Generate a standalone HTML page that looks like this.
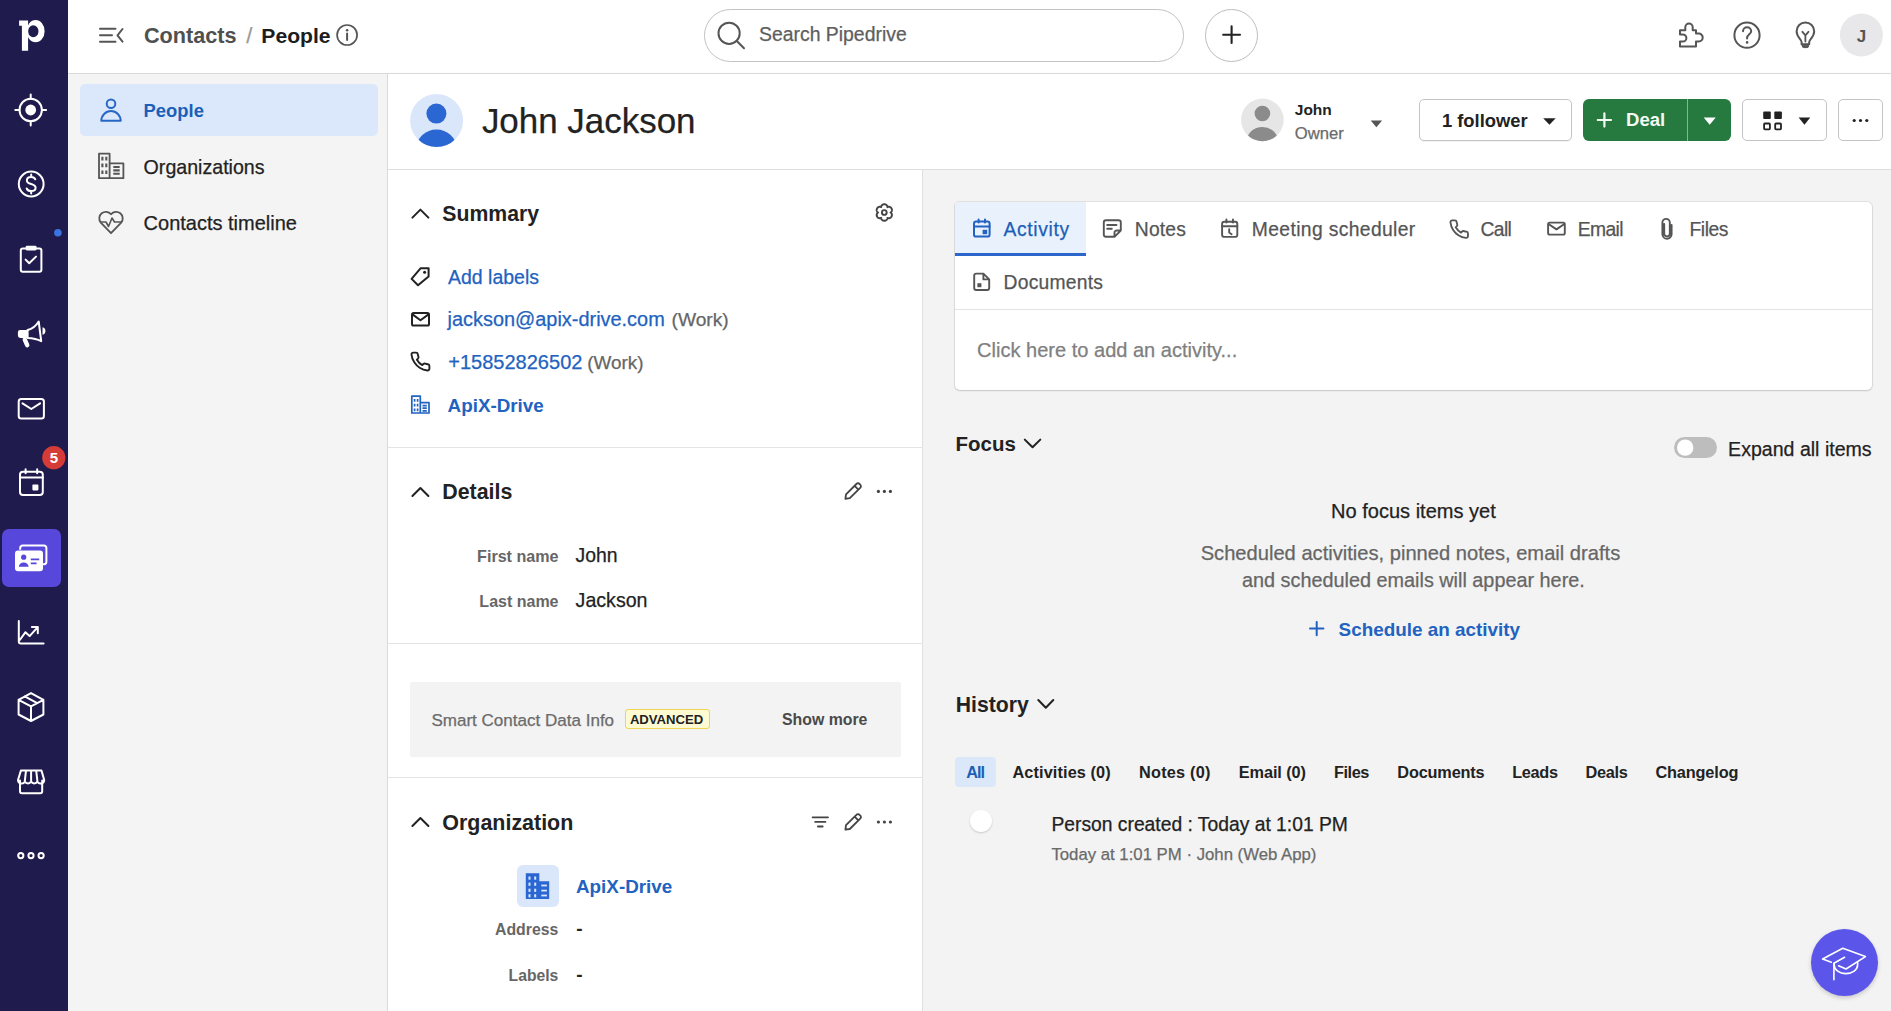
<!DOCTYPE html>
<html><head><meta charset="utf-8"><style>
html,body{margin:0;padding:0;width:1891px;height:1011px;overflow:hidden;background:#f3f3f3}
body{position:relative;font-family:"Liberation Sans",sans-serif}
.t{position:absolute;white-space:nowrap;line-height:1}.r{-webkit-text-stroke:0.25px currentColor}
svg.ov{position:absolute;left:0;top:0}
</style></head><body>
<div style="position:absolute;left:0px;top:0px;width:1891px;height:1011px;background:#f3f3f3"></div>
<div style="position:absolute;left:68px;top:0px;width:1823px;height:73px;background:#fff"></div>
<div style="position:absolute;left:68px;top:73px;width:1823px;height:1px;background:#d9d9d9;box-shadow:0 1px 2px rgba(0,0,0,.08)"></div>
<div style="position:absolute;left:68px;top:74px;width:320px;height:937px;background:#f4f4f4"></div>
<div style="position:absolute;left:387px;top:74px;width:1px;height:937px;background:#dadada"></div>
<div style="position:absolute;left:79.5px;top:83.5px;width:298.0px;height:52.5px;background:#dbe8fb;border-radius:5px"></div>
<div style="position:absolute;left:388px;top:74px;width:1503px;height:95px;background:#fff"></div>
<div style="position:absolute;left:388px;top:169px;width:1503px;height:1px;background:#dedede"></div>
<div style="position:absolute;left:388px;top:170px;width:534px;height:841px;background:#fff"></div>
<div style="position:absolute;left:922px;top:170px;width:1px;height:841px;background:#e0e0e0"></div>
<div style="position:absolute;left:388px;top:447px;width:534px;height:1px;background:#e4e4e4"></div>
<div style="position:absolute;left:388px;top:643px;width:534px;height:1px;background:#e4e4e4"></div>
<div style="position:absolute;left:388px;top:777px;width:534px;height:1px;background:#e4e4e4"></div>
<div style="position:absolute;left:0px;top:0px;width:68px;height:1011px;background:#1f1b4c"></div>
<div style="position:absolute;left:2px;top:529px;width:59px;height:58px;background:#5747da;border-radius:7px"></div>
<div style="position:absolute;left:704px;top:9px;width:480px;height:53px;border:1px solid #c2c2c2;border-radius:27px;box-sizing:border-box;background:#fff"></div>
<div style="position:absolute;left:1205px;top:9px;width:53px;height:53px;border:1.2px solid #bdbdbd;border-radius:50%;box-sizing:border-box;background:#fff"></div>
<div style="position:absolute;left:1419px;top:99px;width:153px;height:42px;border:1px solid #c4c4c4;border-radius:5px;box-sizing:border-box;background:#fff;box-shadow:0 1px 1px rgba(0,0,0,.06)"></div>
<div style="position:absolute;left:1583px;top:99px;width:148px;height:42px;background:#26793f;border-radius:6px"></div>
<div style="position:absolute;left:1687px;top:99px;width:1px;height:42px;background:#7fb98e"></div>
<div style="position:absolute;left:1742px;top:99px;width:85px;height:42px;border:1px solid #c4c4c4;border-radius:5px;box-sizing:border-box;background:#fff"></div>
<div style="position:absolute;left:1838px;top:99px;width:45px;height:42px;border:1px solid #c4c4c4;border-radius:5px;box-sizing:border-box;background:#fff"></div>
<div style="position:absolute;left:409.5px;top:682px;width:491.0px;height:74.5px;background:#f3f3f3;border-radius:2px"></div>
<div style="position:absolute;left:624.7px;top:709.1px;width:85.09999999999991px;height:20.299999999999955px;background:#fefad2;border:1px solid #eed654;border-radius:3px;box-sizing:border-box"></div>
<div style="position:absolute;left:516.5px;top:865px;width:42.5px;height:41.5px;background:#dae7fb;border-radius:6px"></div>
<div style="position:absolute;left:955px;top:202px;width:917px;height:187.5px;background:#fff;border-radius:4px 5px 5px 5px;box-shadow:0 0 0 1px rgba(0,0,0,.075),0 1px 2px rgba(0,0,0,.12)"></div>
<div style="position:absolute;left:955px;top:202px;width:131.29999999999995px;height:54px;background:#e9f1fc;border-top-left-radius:4px"></div>
<div style="position:absolute;left:955px;top:253px;width:131.29999999999995px;height:3px;background:#2a66cc"></div>
<div style="position:absolute;left:955px;top:308.5px;width:917px;height:1.0px;background:#e3e3e3"></div>
<div style="position:absolute;left:1674.4px;top:437px;width:42.399999999999864px;height:21.30000000000001px;background:#bdbdbd;border-radius:11px"></div>
<div style="position:absolute;left:955.1px;top:757.4px;width:41.299999999999955px;height:30.100000000000023px;background:#dbe8fa;border-radius:4px"></div>
<div style="position:absolute;left:970.4px;top:809.6px;width:22.0px;height:22.0px;background:#fff;border-radius:50%;box-shadow:0 1px 2px rgba(0,0,0,.18)"></div>
<div style="position:absolute;left:1810.5px;top:929px;width:67.0px;height:67px;background:#5b56e9;border-radius:50%;box-shadow:0 2px 4px rgba(0,0,0,.18)"></div>
<svg class="ov" width="1891" height="1011" viewBox="0 0 1891 1011">
<g stroke="#555" stroke-width="2" fill="none" stroke-linecap="round" stroke-linejoin="round">
<path d="M100 28.8H115.5M100 35.3H112M100 41.8H115.5M122.5 29L117.5 35.3L122.5 41.6"/>
<circle cx="347.1" cy="35" r="10" stroke-width="1.7"/>
<path d="M347.1 33.5V40" stroke-width="2"/>
</g>
<circle cx="347.1" cy="30.2" r="1.3" fill="#555"/>
<g stroke="#555" stroke-width="2" fill="none" stroke-linecap="round" stroke-linejoin="round">
<circle cx="729.1" cy="33.3" r="10.6"/><path d="M736.8 41L744 48.2"/>
</g>
<path d="M1223.2 34.7H1240M1231.6 26.4V43" stroke="#222" stroke-width="2.1" stroke-linecap="round"/>
<g stroke="#555" stroke-width="2" fill="none" stroke-linecap="round" stroke-linejoin="round">
<path d="M1680 30.2H1685.3V27.3A3.7 3.7 0 0 1 1692.7 27.3V30.2H1696V33.6H1698.8A3.9 3.9 0 0 1 1698.8 41.4H1696V46.5H1680V41.6H1682.8A3.6 3.6 0 0 0 1682.8 34.4H1680Z"/>
<circle cx="1747" cy="35.2" r="12.6"/>
<path d="M1743 31.3A4.1 4.1 0 0 1 1751.2 31.3C1751.2 34 1747.1 34.6 1747.1 37.8V38.6"/>
</g>
<circle cx="1747.1" cy="42.4" r="1.3" fill="#555"/>
<g stroke="#555" stroke-width="2" fill="none" stroke-linecap="round" stroke-linejoin="round">
<path d="M1801.6 44.2V42C1801.6 39.5 1796.6 37 1796.6 31.2A8.8 8.8 0 0 1 1814.2 31.2C1814.2 37 1809.2 39.5 1809.2 42V44.2Z"/>
<path d="M1802.3 45.2H1808.5V46.2A1.4 1.4 0 0 1 1807.1 47.6H1803.7A1.4 1.4 0 0 1 1802.3 46.2Z" fill="#555" stroke-width="1"/>
<path d="M1802.4 31.8L1805.4 35.4L1808.4 31.8M1805.4 35.4V41.5" stroke-width="1.8"/>
</g>
<circle cx="1861.4" cy="35" r="21.5" fill="#e8e8ea"/>
<g stroke="#2767c6" stroke-width="2" fill="none" stroke-linejoin="round">
<circle cx="111" cy="103.8" r="4.3"/>
<path d="M101.3 120.8A9.7 9.7 0 0 1 120.7 120.8Z"/>
</g>
<g stroke="#555" stroke-width="1.8" fill="none" stroke-linejoin="round">
<path d="M99 178.2V153.6H109.6V178.2ZM109.6 163.4H123.4V178.2H109.6"/>
<path d="M102.4 156.8V160.4M106.3 156.8V160.4M102.4 163.6V167.2M106.3 163.6V167.2M102.4 170.4V174M106.3 170.4V174M113.3 167H119.7M113.3 170.4H119.7M113.3 173.8H119.7" stroke-width="2.1" stroke-linecap="butt"/>
<path d="M111 233.2L100.8 222.6A6.4 6.4 0 0 1 111 214.2A6.4 6.4 0 0 1 121.2 222.6Z"/>
<path d="M100.5 222H106L108.5 226.5L112 218L114.5 222H121.5" stroke-width="1.6"/>
</g>
<defs><clipPath id="av"><circle cx="436.6" cy="120.5" r="26.5"/></clipPath><clipPath id="av2"><circle cx="1262.4" cy="119.9" r="21.3"/></clipPath></defs>
<circle cx="436.6" cy="120.5" r="26.5" fill="#dae7fa"/>
<g clip-path="url(#av)"><circle cx="436.4" cy="113.6" r="10" fill="#2a67d2"/><ellipse cx="436.5" cy="148" rx="20" ry="18.5" fill="#2a67d2"/></g>
<circle cx="1262.4" cy="119.9" r="21.3" fill="#e6e6e6"/>
<g clip-path="url(#av2)"><circle cx="1262.4" cy="113.5" r="7.8" fill="#8b8b8b"/><ellipse cx="1262.4" cy="141" rx="15.5" ry="14" fill="#8b8b8b"/></g>
<path d="M1370.7 120.5H1382.1L1376.4 127.2Z" fill="#555"/>
<path d="M1543.2 118.3H1555.7L1549.45 124.8Z" fill="#222222"/>
<path d="M1597.8 120H1611M1604.4 113.4V126.6" stroke="#f4fbf2" stroke-width="2.2" stroke-linecap="round"/>
<path d="M1703.7 117.6H1715.7L1709.7 124.8Z" fill="#fff"/>
<rect x="1763.2" y="111.5" width="7.6" height="7.6" rx="1" fill="#222222"/><rect x="1774.3" y="111.5" width="7.6" height="7.6" rx="1" fill="#222222"/>
<rect x="1764.1" y="123.5" width="5.8" height="5.8" rx="0.8" fill="none" stroke="#222222" stroke-width="1.8"/><rect x="1775.2" y="123.5" width="5.8" height="5.8" rx="0.8" fill="none" stroke="#222222" stroke-width="1.8"/>
<path d="M1798.6 117.6H1810.3L1804.45 124.8Z" fill="#222222"/>
<circle cx="1854.2" cy="120.5" r="1.6" fill="#222222"/><circle cx="1860.5" cy="120.5" r="1.6" fill="#222222"/><circle cx="1866.8" cy="120.5" r="1.6" fill="#222222"/>
<g stroke="#222222" stroke-width="2" fill="none" stroke-linecap="round" stroke-linejoin="round">
<path d="M412.4 217.6L420.4 209.6L428.4 217.6"/>
<path d="M412.4 496L420.4 488L428.4 496"/>
<path d="M412.4 826L420.4 818L428.4 826"/>
</g>
<path d="M890.50 212.50 L890.85 212.33 L891.06 212.15 L891.24 211.95 L891.38 211.76 L891.51 211.55 L891.62 211.34 L891.71 211.13 L891.78 210.91 L891.84 210.69 L891.88 210.47 L891.91 210.25 L891.92 210.02 L891.91 209.80 L891.90 209.58 L891.86 209.37 L891.82 209.15 L891.75 208.94 L891.68 208.74 L891.59 208.54 L891.49 208.35 L891.37 208.17 L891.25 207.99 L891.11 207.82 L890.96 207.66 L890.80 207.52 L890.62 207.38 L890.44 207.25 L890.25 207.14 L890.05 207.04 L889.85 206.95 L889.64 206.88 L889.42 206.82 L889.19 206.77 L888.96 206.74 L888.73 206.73 L888.49 206.74 L888.24 206.77 L887.99 206.82 L887.72 206.91 L887.40 207.13 L887.43 206.74 L887.37 206.47 L887.30 206.22 L887.20 205.99 L887.08 205.78 L886.95 205.58 L886.81 205.40 L886.66 205.23 L886.50 205.07 L886.33 204.92 L886.15 204.79 L885.97 204.66 L885.77 204.56 L885.57 204.46 L885.37 204.38 L885.16 204.32 L884.95 204.27 L884.73 204.23 L884.52 204.21 L884.30 204.20 L884.08 204.21 L883.87 204.23 L883.65 204.27 L883.44 204.32 L883.23 204.38 L883.03 204.46 L882.83 204.56 L882.63 204.66 L882.45 204.79 L882.27 204.92 L882.10 205.07 L881.94 205.23 L881.79 205.40 L881.65 205.58 L881.52 205.78 L881.40 205.99 L881.30 206.22 L881.23 206.47 L881.17 206.74 L881.20 207.13 L880.88 206.91 L880.61 206.82 L880.36 206.77 L880.11 206.74 L879.87 206.73 L879.64 206.74 L879.41 206.77 L879.18 206.82 L878.96 206.88 L878.75 206.95 L878.55 207.04 L878.35 207.14 L878.16 207.25 L877.98 207.38 L877.80 207.52 L877.64 207.66 L877.49 207.82 L877.35 207.99 L877.23 208.17 L877.11 208.35 L877.01 208.54 L876.92 208.74 L876.85 208.94 L876.78 209.15 L876.74 209.37 L876.70 209.58 L876.69 209.80 L876.68 210.02 L876.69 210.25 L876.72 210.47 L876.76 210.69 L876.82 210.91 L876.89 211.13 L876.98 211.34 L877.09 211.55 L877.22 211.76 L877.36 211.95 L877.54 212.15 L877.75 212.33 L878.10 212.50 L877.75 212.67 L877.54 212.85 L877.36 213.05 L877.22 213.24 L877.09 213.45 L876.98 213.66 L876.89 213.87 L876.82 214.09 L876.76 214.31 L876.72 214.53 L876.69 214.75 L876.68 214.98 L876.69 215.20 L876.70 215.42 L876.74 215.63 L876.78 215.85 L876.85 216.06 L876.92 216.26 L877.01 216.46 L877.11 216.65 L877.23 216.83 L877.35 217.01 L877.49 217.18 L877.64 217.34 L877.80 217.48 L877.98 217.62 L878.16 217.75 L878.35 217.86 L878.55 217.96 L878.75 218.05 L878.96 218.12 L879.18 218.18 L879.41 218.23 L879.64 218.26 L879.87 218.27 L880.11 218.26 L880.36 218.23 L880.61 218.18 L880.88 218.09 L881.20 217.87 L881.17 218.26 L881.23 218.53 L881.30 218.78 L881.40 219.01 L881.52 219.22 L881.65 219.42 L881.79 219.60 L881.94 219.77 L882.10 219.93 L882.27 220.08 L882.45 220.21 L882.63 220.34 L882.83 220.44 L883.03 220.54 L883.23 220.62 L883.44 220.68 L883.65 220.73 L883.87 220.77 L884.08 220.79 L884.30 220.80 L884.52 220.79 L884.73 220.77 L884.95 220.73 L885.16 220.68 L885.37 220.62 L885.57 220.54 L885.77 220.44 L885.97 220.34 L886.15 220.21 L886.33 220.08 L886.50 219.93 L886.66 219.77 L886.81 219.60 L886.95 219.42 L887.08 219.22 L887.20 219.01 L887.30 218.78 L887.37 218.53 L887.43 218.26 L887.40 217.87 L887.72 218.09 L887.99 218.18 L888.24 218.23 L888.49 218.26 L888.73 218.27 L888.96 218.26 L889.19 218.23 L889.42 218.18 L889.64 218.12 L889.85 218.05 L890.05 217.96 L890.25 217.86 L890.44 217.75 L890.62 217.62 L890.80 217.48 L890.96 217.34 L891.11 217.18 L891.25 217.01 L891.37 216.83 L891.49 216.65 L891.59 216.46 L891.68 216.26 L891.75 216.06 L891.82 215.85 L891.86 215.63 L891.90 215.42 L891.91 215.20 L891.92 214.98 L891.91 214.75 L891.88 214.53 L891.84 214.31 L891.78 214.09 L891.71 213.87 L891.62 213.66 L891.51 213.45 L891.38 213.24 L891.24 213.05 L891.06 212.85 L890.85 212.67Z" fill="none" stroke="#444" stroke-width="1.9" stroke-linejoin="round"/><circle cx="884.3" cy="212.5" r="2.4" fill="none" stroke="#444" stroke-width="1.9"/>
<g stroke="#222222" stroke-width="2" fill="none" stroke-linecap="round" stroke-linejoin="round">
<path d="M420.5 268.3H428.6V276.4L418 285.3L411.6 278.9Z"/>
</g>
<circle cx="424.6" cy="272.3" r="1.5" fill="#222222"/>
<g stroke="#222222" stroke-width="2" fill="none" stroke-linecap="round" stroke-linejoin="round">
<rect x="412" y="313" width="17" height="12.6" rx="1.6"/><path d="M412.8 314.6L420.5 320.2L428.2 314.6"/>
</g>
<g transform="translate(409.6 350.8) scale(0.9)"><path d="M22 16.92v3a2 2 0 0 1-2.18 2 19.79 19.79 0 0 1-8.63-3.07 19.5 19.5 0 0 1-6-6 19.79 19.79 0 0 1-3.07-8.67A2 2 0 0 1 4.11 2h3a2 2 0 0 1 2 1.72 12.84 12.84 0 0 0 .7 2.81 2 2 0 0 1-.45 2.11L8.09 9.91a16 16 0 0 0 6 6l1.27-1.27a2 2 0 0 1 2.11-.45 12.84 12.84 0 0 0 2.81.7A2 2 0 0 1 22 16.92z" fill="none" stroke="#222222" stroke-width="2.1" stroke-linejoin="round"/></g>
<g stroke="#2262c0" stroke-width="1.7" fill="none" stroke-linejoin="round">
<path d="M411.8 413V396.2H420.3V413ZM420.3 402.6H429V413H420.3"/>
<path d="M414.6 399V401.8M417.6 399V401.8M414.6 403.7V406.5M417.6 403.7V406.5M414.6 408.4V411.2M417.6 408.4V411.2M422.5 405.6H426.8M422.5 408.2H426.8M422.5 410.8H426.8" stroke-width="1.7" stroke-linecap="butt"/>
</g>
<path d="M845.4000000000001 498.8L846.0 494.40000000000003L856.4000000000001 484.0A2.1 2.1 0 0 1 859.6 484.0L860.2 484.6A2.1 2.1 0 0 1 860.2 487.8L849.8000000000001 498.2Z M854.6 485.8L858.4000000000001 489.6" fill="none" stroke="#444" stroke-width="1.8" stroke-linejoin="round" stroke-linecap="round"/>
<circle cx="878.4" cy="491.4" r="1.6" fill="#444"/><circle cx="884.4" cy="491.4" r="1.6" fill="#444"/><circle cx="890.4" cy="491.4" r="1.6" fill="#444"/>
<path d="M812.6 817.3H828M815.2 821.9H825.4M817.9 826.5H822.7" stroke="#444" stroke-width="1.8" stroke-linecap="round"/>
<path d="M845.4000000000001 829.6L846.0 825.2L856.4000000000001 814.8000000000001A2.1 2.1 0 0 1 859.6 814.8000000000001L860.2 815.4A2.1 2.1 0 0 1 860.2 818.6L849.8000000000001 829.0Z M854.6 816.6L858.4000000000001 820.4" fill="none" stroke="#444" stroke-width="1.8" stroke-linejoin="round" stroke-linecap="round"/>
<circle cx="878.4" cy="822" r="1.6" fill="#444"/><circle cx="884.4" cy="822" r="1.6" fill="#444"/><circle cx="890.4" cy="822" r="1.6" fill="#444"/>
<path d="M525.8 899V873.2H539.3V881.3H549.2V899Z" fill="#2a67d3"/>
<g fill="#dae7fb"><rect x="528.5" y="876.5" width="2" height="3.2"/><rect x="528.5" y="882.6" width="2" height="3.2"/><rect x="528.5" y="888.7" width="2" height="3.2"/><rect x="528.5" y="894.2" width="2" height="3.2"/><rect x="534.2" y="876.5" width="2" height="3.2"/><rect x="534.2" y="882.6" width="2" height="3.2"/><rect x="534.2" y="888.7" width="2" height="3.2"/><rect x="534.2" y="894.2" width="2" height="3.2"/><rect x="541.3" y="884.6" width="5.6" height="1.8"/><rect x="541.3" y="889.7" width="5.6" height="1.8"/><rect x="541.3" y="894.6" width="5.6" height="1.8"/></g>
<g stroke="#2262c0" stroke-width="2" fill="none" stroke-linecap="round" stroke-linejoin="round">
<rect x="974" y="221.6" width="15.6" height="15" rx="2.2"/><path d="M974 226.4H989.6M978.6 219.4V222.6M985 219.4V222.6"/>
</g>
<rect x="982.6" y="229.8" width="4.6" height="4.4" fill="#2262c0"/>
<g stroke="#555" stroke-width="1.9" fill="none" stroke-linecap="round" stroke-linejoin="round">
<path d="M1114.5 236.8H1106A2.2 2.2 0 0 1 1103.8 234.6V222.4A2.2 2.2 0 0 1 1106 220.2H1118.6A2.2 2.2 0 0 1 1120.8 222.4V230.5ZM1114.5 236.8V232.7A2.2 2.2 0 0 1 1116.7 230.5H1120.8M1107.2 225H1116.5M1107.2 228.8H1111.8"/>
<rect x="1222.1" y="221.7" width="15.2" height="15.2" rx="2.2"/><path d="M1222.1 226.2H1237.3M1226.4 219.4V222.6M1233 219.4V222.6M1229.2 229.2V232.4L1231.6 234.2"/>
</g>
<g transform="translate(1448.6 218.6) scale(0.88)"><path d="M22 16.92v3a2 2 0 0 1-2.18 2 19.79 19.79 0 0 1-8.63-3.07 19.5 19.5 0 0 1-6-6 19.79 19.79 0 0 1-3.07-8.67A2 2 0 0 1 4.11 2h3a2 2 0 0 1 2 1.72 12.84 12.84 0 0 0 .7 2.81 2 2 0 0 1-.45 2.11L8.09 9.91a16 16 0 0 0 6 6l1.27-1.27a2 2 0 0 1 2.11-.45 12.84 12.84 0 0 0 2.81.7A2 2 0 0 1 22 16.92z" fill="none" stroke="#555" stroke-width="2.1" stroke-linejoin="round"/></g>
<g stroke="#555" stroke-width="1.9" fill="none" stroke-linecap="round" stroke-linejoin="round">
<rect x="1548.1" y="222.6" width="16.7" height="12" rx="1.6"/><path d="M1548.9 224.2L1556.45 229.4L1564 224.2"/>
<path d="M1664.2 224V233.6A2.8 2.8 0 0 0 1669.8 233.6V222.6A3.7 3.7 0 0 0 1662.4 222.6V234.2A4.6 4.6 0 0 0 1671.6 234.2V225"/>
<path d="M974.2 275.5A2 2 0 0 1 976.2 273.6H983.4L989.2 279.4V288A2 2 0 0 1 987.2 290H976.2A2 2 0 0 1 974.2 288ZM983.4 273.6V279.4H989.2"/>
</g>
<rect x="977.4" y="283.2" width="4" height="4" fill="#555"/>
<path d="M1024.8 439.6L1032.55 447.3L1040.3 439.6" stroke="#222222" stroke-width="2" fill="none" stroke-linecap="round" stroke-linejoin="round"/>
<circle cx="1685.2" cy="447.65" r="8.2" fill="#fff"/>
<path d="M1310 628.6H1323.4M1316.7 621.9V635.3" stroke="#2262c0" stroke-width="2" stroke-linecap="round"/>
<path d="M1038.3 700L1045.8 707.7L1053.3 700" stroke="#222222" stroke-width="2" fill="none" stroke-linecap="round" stroke-linejoin="round"/>
<g stroke="#fff" stroke-width="1.6" fill="none" stroke-linecap="round" stroke-linejoin="round">
<path d="M1831.3 962.2L1822.6 959L1842.8 948.3L1865.4 956.6L1846 969L1838.6 965.8"/>
<path d="M1844.6 957.3L1833.9 963.2V979.8"/>
<path d="M1834.2 963.2V965A11.7 8.6 0 0 0 1857.6 965V962.2"/>
</g>
<path d="M19.1 20.6H28.1V50.8H21.9V25.8H19.1Z" fill="#fff"/>
<path fill-rule="evenodd" d="M44.6 31.2A9 11.1 0 1 1 26.6 31.2A9 11.1 0 1 1 44.6 31.2ZM38.5 31.3A5.2 6 0 1 0 28.1 31.3A5.2 6 0 1 0 38.5 31.3Z" fill="#fff"/>
<g stroke="#fff" stroke-width="2" fill="none" stroke-linecap="round" stroke-linejoin="round">
<circle cx="30.7" cy="110" r="11.2"/><path d="M30.7 94.6V98.8M30.7 121.2V125.4M15.3 110H19.5M41.9 110H46.1"/>
<circle cx="31.2" cy="184" r="12.4"/><path d="M35.3 179.3C34.6 177.6 33 177 31.2 177C28.6 177 26.9 178.5 26.9 180.4C26.9 185 35.6 183 35.6 187.8C35.6 189.9 33.7 191.1 31.2 191.1C29.1 191.1 27.4 190.2 26.7 188.5M31.2 174.6V177M31.2 191.1V193.4"/>
<rect x="20.8" y="248.6" width="20.6" height="23.2" rx="2"/><path d="M25.6 259.6L29.2 263.2L36 256.6"/>
</g>
<circle cx="30.7" cy="110" r="5.4" fill="#fff"/>
<rect x="25.6" y="245.8" width="11" height="4.6" rx="1.4" fill="#fff"/>
<path d="M17.9 332.2A2.3 2.3 0 0 1 20.2 329.9H27.6V337.9H20.2A2.3 2.3 0 0 1 17.9 335.6Z" fill="#fff"/>
<path d="M27.6 330C32 329 36 326 38.7 321.5L41.2 341.2C37 338.8 32 338 27.6 337.9Z" fill="none" stroke="#fff" stroke-width="2" stroke-linejoin="round"/>
<path d="M42.5 327.3A3.8 3.8 0 0 1 42.5 334.7Z" fill="#fff"/>
<path d="M24.8 339.6L27.2 345.2" stroke="#fff" stroke-width="4.4" stroke-linecap="round"/>
<g stroke="#fff" stroke-width="2" fill="none" stroke-linecap="round" stroke-linejoin="round">
<rect x="18.7" y="398.9" width="25.2" height="19.6" rx="2.5"/><path d="M22.5 403.4L31.3 409L40.1 403.4"/>
<rect x="20" y="471.8" width="22.8" height="23.2" rx="3"/><path d="M20 477.4H42.8M25.6 469.2V473.2M37.2 469.2V473.2"/>
</g>
<rect x="32.4" y="484.6" width="6" height="5.8" rx="0.8" fill="#fff"/>
<circle cx="53.8" cy="457.7" r="11.6" fill="#d63c37"/>
<circle cx="57.9" cy="232.8" r="3.8" fill="#3a74e0"/>
<path d="M20.2 549.8V548A2.4 2.4 0 0 1 22.6 545.6H44A2.4 2.4 0 0 1 46.4 548V561.8A2.4 2.4 0 0 1 44 564.2H43" fill="none" stroke="#fff" stroke-width="2"/>
<rect x="15" y="550.5" width="28" height="20.8" rx="3" fill="#fff"/>
<circle cx="23.7" cy="557.2" r="2.6" fill="#5747da"/><path d="M18.8 566.8A4.9 4.4 0 0 1 28.6 566.8Z" fill="#5747da"/>
<path d="M30.8 559.3H39.2M30.8 563.4H36.6" stroke="#5747da" stroke-width="1.8"/>
<g stroke="#fff" stroke-width="2" fill="none" stroke-linecap="round" stroke-linejoin="round">
<path d="M18.8 621V641.6A2 2 0 0 0 20.8 643.6H43.6M19.8 640L25.5 632.2L29.6 636.1L37.5 627.4M31.9 627.1H37.8V633.2"/>
<path d="M31 693.1L43.4 699.8V714.5L31 721L18.6 714.5V699.8ZM18.6 699.8L31 706.4L43.4 699.8M31 706.4V721M24.8 696.4L37.2 703.1"/>
<path d="M20 780.5V791.2A2 2 0 0 0 22 793.2H40.2A2 2 0 0 0 42.2 791.2V780.5"/>
<path d="M20.9 770.6H41.5L44.2 780A3.6 3.6 0 0 1 37.4 781.6A3.6 3.6 0 0 1 31.1 781.6A3.6 3.6 0 0 1 24.8 781.6A3.6 3.6 0 0 1 18 780ZM26 770.6L24.8 781.2M31.1 770.6V781.2M36.2 770.6L37.4 781.2"/>
<circle cx="20.8" cy="855.6" r="2.6"/><circle cx="31" cy="855.6" r="2.6"/><circle cx="41.1" cy="855.6" r="2.6"/>
</g>
</svg>
<div class="t" style="left:144.00px;top:24.98px;font-size:21.64px;font-weight:bold;color:#505050">Contacts</div>
<div class="t r" style="left:246.14px;top:24.68px;font-size:22.00px;font-weight:normal;color:#9a9a9a">/</div>
<div class="t" style="left:261.30px;top:25.41px;font-size:21.14px;font-weight:bold;color:#1d1d1d">People</div>
<div class="t r" style="left:759.00px;top:24.78px;font-size:19.40px;font-weight:normal;color:#5e5e5e">Search Pipedrive</div>
<div class="t" style="left:1856.87px;top:28.21px;font-size:17.00px;font-weight:bold;color:#555">J</div>
<div class="t" style="left:143.60px;top:101.81px;font-size:18.42px;font-weight:bold;color:#1b5fb8">People</div>
<div class="t r" style="left:143.60px;top:158.00px;font-size:19.61px;font-weight:normal;color:#222222">Organizations</div>
<div class="t r" style="left:143.60px;top:212.58px;font-size:19.99px;font-weight:normal;color:#222222">Contacts timeline</div>
<div class="t r" style="left:481.90px;top:104.02px;font-size:34.95px;font-weight:normal;color:#222222">John Jackson</div>
<div class="t" style="left:1294.80px;top:101.89px;font-size:15.49px;font-weight:bold;color:#222222">John</div>
<div class="t r" style="left:1294.80px;top:125.92px;font-size:16.64px;font-weight:normal;color:#6a6a6a">Owner</div>
<div class="t" style="left:1441.90px;top:112.06px;font-size:18.36px;font-weight:bold;color:#222222">1 follower</div>
<div class="t" style="left:1626.00px;top:110.69px;font-size:18.56px;font-weight:bold;color:#f4fbf2">Deal</div>
<div class="t" style="left:442.30px;top:204.42px;font-size:21.24px;font-weight:bold;color:#222222">Summary</div>
<div class="t r" style="left:448.00px;top:267.70px;font-size:19.49px;font-weight:normal;color:#2262c0">Add labels</div>
<div class="t r" style="left:447.60px;top:309.64px;font-size:19.91px;font-weight:normal;color:#2262c0">jackson@apix-drive.com</div>
<div class="t r" style="left:671.50px;top:310.26px;font-size:19.19px;font-weight:normal;color:#666">(Work)</div>
<div class="t r" style="left:448.20px;top:351.74px;font-size:20.04px;font-weight:normal;color:#2262c0">+15852826502</div>
<div class="t r" style="left:587.30px;top:353.71px;font-size:18.89px;font-weight:normal;color:#666">(Work)</div>
<div class="t" style="left:447.60px;top:396.97px;font-size:18.82px;font-weight:bold;color:#2262c0">ApiX-Drive</div>
<div class="t" style="left:442.30px;top:482.33px;font-size:21.35px;font-weight:bold;color:#222222">Details</div>
<div class="t" style="left:477.08px;top:547.57px;font-size:16.10px;font-weight:bold;color:#666">First name</div>
<div class="t r" style="left:575.60px;top:545.80px;font-size:19.37px;font-weight:normal;color:#222222">John</div>
<div class="t" style="left:479.36px;top:594.46px;font-size:16.00px;font-weight:bold;color:#666">Last name</div>
<div class="t r" style="left:575.60px;top:591.39px;font-size:19.63px;font-weight:normal;color:#222222">Jackson</div>
<div class="t r" style="left:431.40px;top:712.27px;font-size:17.04px;font-weight:normal;color:#6b6b6b">Smart Contact Data Info</div>
<div class="t" style="left:629.90px;top:713.31px;font-size:13.11px;font-weight:bold;color:#222222">ADVANCED</div>
<div class="t" style="left:782.00px;top:712.29px;font-size:15.85px;font-weight:bold;color:#4a4a4a">Show more</div>
<div class="t" style="left:442.30px;top:812.75px;font-size:21.44px;font-weight:bold;color:#222222">Organization</div>
<div class="t" style="left:576.00px;top:878.35px;font-size:18.84px;font-weight:bold;color:#2262c0">ApiX-Drive</div>
<div class="t" style="left:495.00px;top:921.81px;font-size:15.82px;font-weight:bold;color:#666">Address</div>
<div class="t" style="left:576.20px;top:919.12px;font-size:19.00px;font-weight:bold;color:#222222">-</div>
<div class="t" style="left:508.60px;top:968.32px;font-size:15.69px;font-weight:bold;color:#666">Labels</div>
<div class="t" style="left:576.20px;top:964.52px;font-size:19.00px;font-weight:bold;color:#222222">-</div>
<div class="t r" style="left:1003.50px;top:219.66px;font-size:19.30px;font-weight:normal;color:#1b5fb8;letter-spacing:0.668px">Activity</div>
<div class="t r" style="left:1134.80px;top:219.66px;font-size:19.30px;font-weight:normal;color:#555;letter-spacing:0.171px">Notes</div>
<div class="t r" style="left:1251.80px;top:219.66px;font-size:19.30px;font-weight:normal;color:#555;letter-spacing:0.368px">Meeting scheduler</div>
<div class="t r" style="left:1480.50px;top:219.66px;font-size:19.30px;font-weight:normal;color:#555;letter-spacing:-0.616px">Call</div>
<div class="t r" style="left:1577.70px;top:219.66px;font-size:19.30px;font-weight:normal;color:#555;letter-spacing:-0.615px">Email</div>
<div class="t r" style="left:1689.40px;top:219.66px;font-size:19.30px;font-weight:normal;color:#555;letter-spacing:-0.412px">Files</div>
<div class="t r" style="left:1003.50px;top:272.86px;font-size:19.30px;font-weight:normal;color:#555;letter-spacing:0.248px">Documents</div>
<div class="t r" style="left:977.10px;top:340.13px;font-size:20.04px;font-weight:normal;color:#808080">Click here to add an activity...</div>
<div class="t" style="left:955.60px;top:434.00px;font-size:20.44px;font-weight:bold;color:#222222">Focus</div>
<div class="t r" style="left:1728.10px;top:440.33px;font-size:19.57px;font-weight:normal;color:#222222">Expand all items</div>
<div class="t r" style="left:1331.10px;top:500.55px;font-size:20.02px;font-weight:normal;color:#222222">No focus items yet</div>
<div class="t r" style="left:1200.70px;top:542.75px;font-size:20.14px;font-weight:normal;color:#666">Scheduled activities, pinned notes, email drafts</div>
<div class="t r" style="left:1242.00px;top:570.51px;font-size:19.83px;font-weight:normal;color:#666">and scheduled emails will appear here.</div>
<div class="t" style="left:1338.60px;top:621.21px;font-size:18.89px;font-weight:bold;color:#2262c0">Schedule an activity</div>
<div class="t" style="left:955.80px;top:693.66px;font-size:21.19px;font-weight:bold;color:#222222">History</div>
<div class="t" style="left:966.30px;top:764.00px;font-size:16.30px;font-weight:bold;color:#1b5fb8;letter-spacing:-1.064px">All</div>
<div class="t" style="left:1012.50px;top:764.00px;font-size:16.30px;font-weight:bold;color:#222222;letter-spacing:0.106px">Activities (0)</div>
<div class="t" style="left:1139.00px;top:764.00px;font-size:16.30px;font-weight:bold;color:#222222;letter-spacing:0.220px">Notes (0)</div>
<div class="t" style="left:1238.70px;top:764.00px;font-size:16.30px;font-weight:bold;color:#222222;letter-spacing:-0.067px">Email (0)</div>
<div class="t" style="left:1334.10px;top:764.00px;font-size:16.30px;font-weight:bold;color:#222222;letter-spacing:-0.486px">Files</div>
<div class="t" style="left:1397.30px;top:764.00px;font-size:16.30px;font-weight:bold;color:#222222;letter-spacing:-0.170px">Documents</div>
<div class="t" style="left:1512.20px;top:764.00px;font-size:16.30px;font-weight:bold;color:#222222;letter-spacing:-0.302px">Leads</div>
<div class="t" style="left:1585.60px;top:764.00px;font-size:16.30px;font-weight:bold;color:#222222;letter-spacing:-0.299px">Deals</div>
<div class="t" style="left:1655.40px;top:764.00px;font-size:16.30px;font-weight:bold;color:#222222;letter-spacing:-0.139px">Changelog</div>
<div class="t r" style="left:1051.40px;top:815.46px;font-size:19.30px;font-weight:normal;color:#222222">Person created : Today at 1:01 PM</div>
<div class="t r" style="left:1051.40px;top:847.31px;font-size:16.76px;font-weight:normal;color:#6a6a6a">Today at 1:01 PM · John (Web App)</div>
<div class="t" style="left:49.63px;top:449.50px;font-size:15.00px;font-weight:bold;color:#fff">5</div>
</body></html>
